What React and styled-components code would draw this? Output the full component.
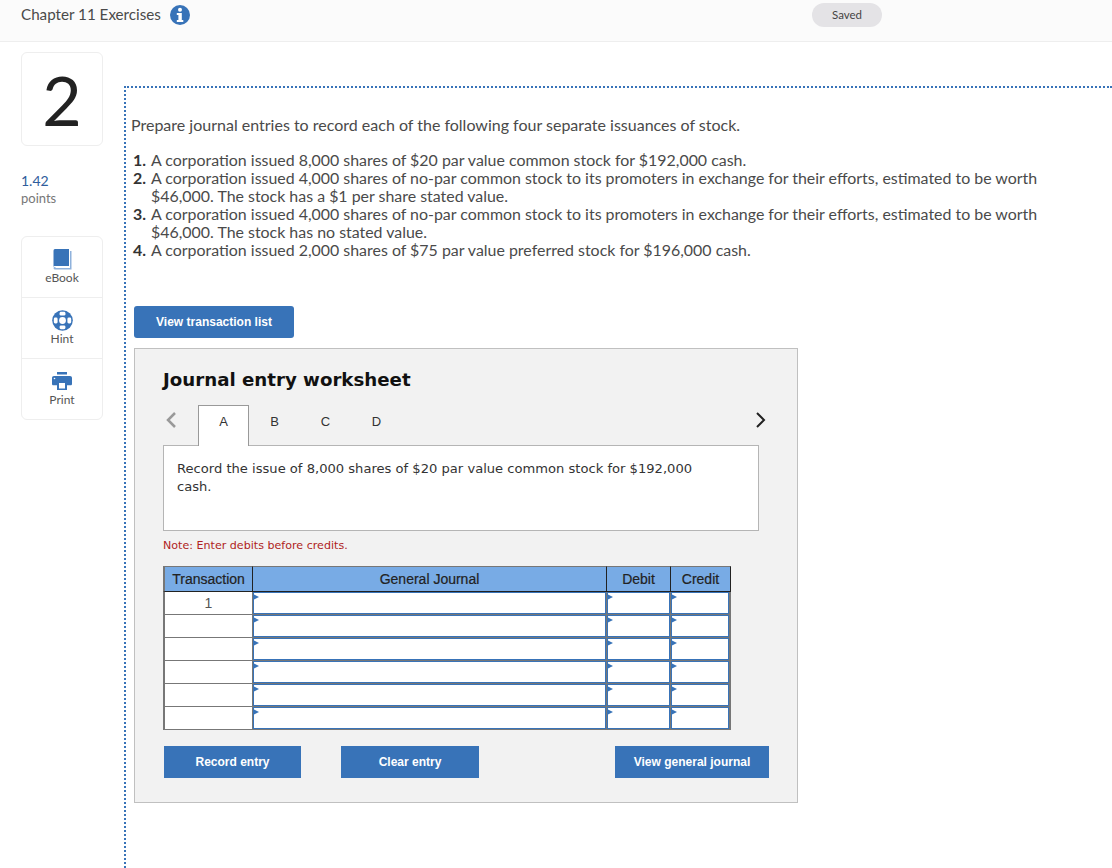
import styled, { createGlobalStyle } from 'styled-components'

const GlobalStyle = createGlobalStyle`
  html, body {
    margin: 0;
    padding: 0;
    background: #fff;
    overflow: hidden;
  }
  body {
    font-family: 'Lato', 'Liberation Sans', sans-serif;
    color: #333;
  }
`

const rows = ['1', '', '', '', '', '']
const tabs = ['A', 'B', 'C', 'D']

const BookIcon = () => (
  <svg width="19" height="21" viewBox="0 0 19 21">
    <path d="M2 0h14v17H2.500C1.200 17 .5 17.500 .5 18.200V2C.5.800 1 0 2 0z" fill="#3873b8" />
    <path d="M17 2h1.500v18.500H2.500C1.100 20.500 .5 19.800 .5 19c0-.7.8-1 2-1v1h14.500z" fill="#8fb2dc" />
  </svg>
)

const HintIcon = () => (
  <svg width="21" height="21" viewBox="0 0 21 21">
    <circle cx="10.500" cy="10.500" r="10.300" fill="#3873b8" />
    <circle cx="10.500" cy="10.500" r="3.400" fill="#fff" />
    <rect x="7.600" y="1.800" width="5.800" height="3.800" rx="1.400" fill="#fff" />
    <rect x="7.600" y="15.400" width="5.800" height="3.800" rx="1.400" fill="#fff" />
    <rect x="1.800" y="7.600" width="3.800" height="5.800" rx="1.400" fill="#fff" />
    <rect x="15.400" y="7.600" width="3.800" height="5.800" rx="1.400" fill="#fff" />
  </svg>
)

const PrintIcon = () => (
  <svg width="20" height="18" viewBox="0 0 20 18">
    <rect x="5" y="0" width="10" height="2.500" fill="#3873b8" />
    <path d="M2 4h16c1.200 0 2 .8 2 2v6c0 .8-.6 1.300-1.400 1.300H15V9H5v4.300H1.400C.6 13.300 0 12.800 0 12V6c0-1.200.8-2 2-2z" fill="#3873b8" />
    <circle cx="2.500" cy="6.500" r=".8" fill="#fff" />
    <path d="M5 9h10v9H5z" fill="#3873b8" />
    <rect x="7" y="11" width="6" height="5.500" fill="#fff" />
  </svg>
)

const InfoIcon = () => (
  <svg width="20" height="20" viewBox="0 0 20 20">
    <circle cx="10" cy="10" r="10" fill="#3873b8" />
    <circle cx="10" cy="4.800" r="2" fill="#fff" />
    <path d="M6.800 8h5v7h1.500v2H6.800v-2h1.600v-5H6.800z" fill="#fff" />
  </svg>
)

const Chevron = ({ color, width }) => (
  <svg width="12" height="18" viewBox="0 0 12 18">
    <path d="M10 2 3 9l7 7" fill="none" stroke={color} strokeWidth={width} />
  </svg>
)

const App = () => {
  return (
    <Page>
      <GlobalStyle />
      <Header>
        <HeaderTitle>Chapter 11 Exercises</HeaderTitle>
        <InfoIcon />
        <SavedPill>Saved</SavedPill>
      </Header>
      <Body>
        <Sidebar>
          <NumberCard>2</NumberCard>
          <PointsValue>1.42</PointsValue>
          <PointsLabel>points</PointsLabel>
          <ToolCard>
            <Tool>
              <ToolIcon><BookIcon /></ToolIcon>
              <span>eBook</span>
            </Tool>
            <Tool>
              <ToolIcon><HintIcon /></ToolIcon>
              <span>Hint</span>
            </Tool>
            <Tool>
              <ToolIcon><PrintIcon /></ToolIcon>
              <span>Print</span>
            </Tool>
          </ToolCard>
        </Sidebar>
        <Content>
          <Intro>
            Prepare journal entries to record each of the following four separate issuances of stock.
          </Intro>
          <List>
            <Item><Num>1.</Num><span>A corporation issued 8,000 shares of $20 par value common stock for $192,000 cash.</span></Item>
            <Item><Num>2.</Num><span>A corporation issued 4,000 shares of no-par common stock to its promoters in exchange for their efforts, estimated to be worth $46,000. The stock has a $1 per share stated value.</span></Item>
            <Item><Num>3.</Num><span>A corporation issued 4,000 shares of no-par common stock to its promoters in exchange for their efforts, estimated to be worth $46,000. The stock has no stated value.</span></Item>
            <Item><Num>4.</Num><span>A corporation issued 2,000 shares of $75 par value preferred stock for $196,000 cash.</span></Item>
          </List>
          <TransactionButton>View transaction list</TransactionButton>
          <Worksheet>
            <WorksheetTitle>Journal entry worksheet</WorksheetTitle>
            <TabRow>
              <PrevArrow>
                <Chevron color="#999" width={2.5} />
              </PrevArrow>
              <Tabs>
                {tabs.map((t, i) => (
                  <Tab key={t} $active={i === 0}>{t}</Tab>
                ))}
              </Tabs>
              <NextArrow>
                <Chevron color="#222" width={2} />
              </NextArrow>
            </TabRow>
            <Description>
              Record the issue of 8,000 shares of $20 par value common stock for $192,000 cash.
            </Description>
            <Note>Note: Enter debits before credits.</Note>
            <Journal>
              <HeadCell>Transaction</HeadCell>
              <HeadCell>General Journal</HeadCell>
              <HeadCell>Debit</HeadCell>
              <HeadCell>Credit</HeadCell>
              {rows.map((r, i) => (
                <JournalRow key={i} value={r} />
              ))}
            </Journal>
            <Actions>
              <ActionGroup>
                <ActionButton $w={137}>Record entry</ActionButton>
                <ActionButton $w={138}>Clear entry</ActionButton>
              </ActionGroup>
              <ActionButton $w={154}>View general journal</ActionButton>
            </Actions>
          </Worksheet>
        </Content>
      </Body>
    </Page>
  )
}

const JournalRow = ({ value }) => (
  <>
    <TxCell>{value}</TxCell>
    <InputCell />
    <InputCell />
    <InputCell $last />
  </>
)

export default App

const Page = styled.div`
  width: 1112px;
  height: 868px;
  overflow: hidden;
`
const Header = styled.div`
  box-sizing: border-box;
  height: 42px;
  padding: 0 230px 16px 21px;
  background: #fbfbfb;
  border-bottom: 1px solid #eee;
  display: flex;
  align-items: flex-end;
  gap: 9px;
`
const HeaderTitle = styled.div`
  font-size: 15.200px;
  line-height: 20px;
  color: #4a4a4a;
  margin-bottom: 1px;
`
const SavedPill = styled.div`
  align-self: flex-start;
  box-sizing: border-box;
  margin: 3px 0 0 auto;
  padding-bottom: 2px;
  width: 70px;
  height: 24px;
  border-radius: 12px;
  background: #e4e3e6;
  color: #444;
  font-size: 11.500px;
  display: flex;
  align-items: center;
  justify-content: center;
`
const Body = styled.div`
  display: flex;
`
const Sidebar = styled.div`
  box-sizing: border-box;
  width: 124px;
  padding: 10px 0 0 21px;
  flex: none;
`
const NumberCard = styled.div`
  box-sizing: border-box;
  width: 82px;
  height: 94px;
  border: 1px solid #eee;
  border-radius: 6px;
  display: flex;
  align-items: center;
  justify-content: center;
  font-size: 68px;
  color: #222;
`
const PointsValue = styled.div`
  margin-top: 26px;
  font-size: 14px;
  line-height: 18px;
  color: #2f5d9c;
`
const PointsLabel = styled.div`
  font-size: 13px;
  line-height: 17px;
  color: #777;
`
const ToolCard = styled.div`
  box-sizing: border-box;
  width: 82px;
  margin-top: 29px;
  border: 1px solid #eee;
  border-radius: 6px;
`
const Tool = styled.div`
  height: 61px;
  box-sizing: border-box;
  padding-top: 11px;
  display: flex;
  flex-direction: column;
  align-items: center;
  font-size: 12px;
  line-height: 15px;
  color: #555;
  border-bottom: 1px solid #eee;
  &:last-child {
    border-bottom: none;
    height: 60px;
  }
`
const ToolIcon = styled.div`
  height: 22px;
  display: flex;
  align-items: center;
`
const Content = styled.div`
  box-sizing: border-box;
  margin-top: 44px;
  flex: 1;
  height: 790px;
  padding: 28px 0 0 5px;
  border-top: 2px dotted #3873b8;
  border-left: 2px dotted #3873b8;
`
const Intro = styled.div`
  font-size: 16px;
  line-height: 18px;
  color: #4a4a4a;
`
const List = styled.div`
  margin-top: 17px;
  width: 915px;
`
const Item = styled.div`
  display: flex;
  font-size: 15.930px;
  line-height: 18px;
  color: #4a4a4a;
`
const Num = styled.b`
  flex: none;
  box-sizing: border-box;
  width: 13px;
  margin: 0 5px 0 2px;
  text-align: right;
  color: #333;
`
const TransactionButton = styled.div`
  margin: 47px 0 0 3px;
  width: 160px;
  height: 32px;
  border-radius: 3px;
  background: #3873b8;
  color: #fff;
  font-family: 'Liberation Sans', Arial, sans-serif;
  font-weight: bold;
  font-size: 12px;
  display: flex;
  align-items: center;
  justify-content: center;
`
const Worksheet = styled.div`
  box-sizing: border-box;
  margin: 10px 0 0 3px;
  width: 664px;
  height: 455px;
  padding: 20px 28px 0 28px;
  background: #f2f2f2;
  border: 1px solid #c0c0c0;
  font-family: 'DejaVu Sans', Verdana, sans-serif;
`
const WorksheetTitle = styled.div`
  font-size: 18.200px;
  line-height: 21px;
  font-weight: bold;
  color: #111;
`
const TabRow = styled.div`
  margin-top: 15px;
  height: 41px;
  width: 604px;
  display: flex;
  align-items: flex-start;
`
const Tabs = styled.div`
  display: flex;
  margin-left: 21px;
`
const Tab = styled.div`
  box-sizing: border-box;
  width: 51px;
  height: 41px;
  padding-bottom: 10px;
  display: flex;
  align-items: center;
  justify-content: center;
  font-family: 'Liberation Sans', Arial, sans-serif;
  font-size: 13px;
  color: #333;
  background: ${(p) => (p.$active ? '#fff' : 'transparent')};
  border: 1px solid ${(p) => (p.$active ? '#999' : 'transparent')};
  border-bottom: none;
  position: relative;
  z-index: 1;
`
const PrevArrow = styled.div`
  margin: 6px 0 0 2px;
  height: 18px;
`
const NextArrow = styled.div`
  margin: 6px 0 0 auto;
  height: 18px;
  transform: scaleX(-1);
`
const Description = styled.div`
  box-sizing: border-box;
  width: 596px;
  height: 86px;
  margin-top: -1px;
  padding: 14px 60px 0 13px;
  background: #fff;
  border: 1px solid #b5b5b5;
  font-size: 13.100px;
  line-height: 18px;
  color: #333;
`
const Note = styled.div`
  margin-top: 8px;
  font-size: 11.100px;
  line-height: 14px;
  color: #b01e23;
`
const Journal = styled.div`
  margin-top: 13px;
  width: 568px;
  display: grid;
  grid-template-columns: 90px 354px 64px 60px;
  grid-template-rows: 26px repeat(6, 23px);
`
const HeadCell = styled.div`
  box-sizing: border-box;
  background: #78abe5;
  border-top: 1px solid #777;
  border-bottom: 1px solid #222;
  border-right: 1px solid #222;
  font-family: 'Liberation Sans', Arial, sans-serif;
  font-size: 14px;
  -webkit-text-stroke: 0.2px #222;
  color: #222;
  display: flex;
  align-items: center;
  justify-content: center;
  &:first-child {
    border-left: 2px solid #777;
  }
`
const TxCell = styled.div`
  box-sizing: border-box;
  background: #fff;
  border-left: 2px solid #777;
  border-right: 1px solid #777;
  border-bottom: 1px solid #777;
  font-family: 'Liberation Sans', Arial, sans-serif;
  font-size: 14px;
  color: #555;
  display: flex;
  align-items: center;
  justify-content: center;
`
const InputCell = styled.div`
  box-sizing: border-box;
  position: relative;
  background: #fff;
  border-bottom: 1px solid #777;
  border-right: ${(p) => (p.$last ? 2 : 1)}px solid #777;
  box-shadow: inset 0 0 0 1px #3873b8;
  &::before {
    content: '';
    position: absolute;
    left: 0;
    top: 2px;
    border-left: 6px solid #3873b8;
    border-top: 3.500px solid transparent;
    border-bottom: 3.500px solid transparent;
  }
`
const Actions = styled.div`
  margin: 16px 0 0 1px;
  width: 605px;
  display: flex;
  justify-content: space-between;
`
const ActionGroup = styled.div`
  display: flex;
  gap: 40px;
`
const ActionButton = styled.div`
  width: ${(p) => p.$w}px;
  height: 32px;
  background: #3873b8;
  color: #fff;
  font-family: 'Liberation Sans', Arial, sans-serif;
  font-weight: bold;
  font-size: 12px;
  display: flex;
  align-items: center;
  justify-content: center;
`
